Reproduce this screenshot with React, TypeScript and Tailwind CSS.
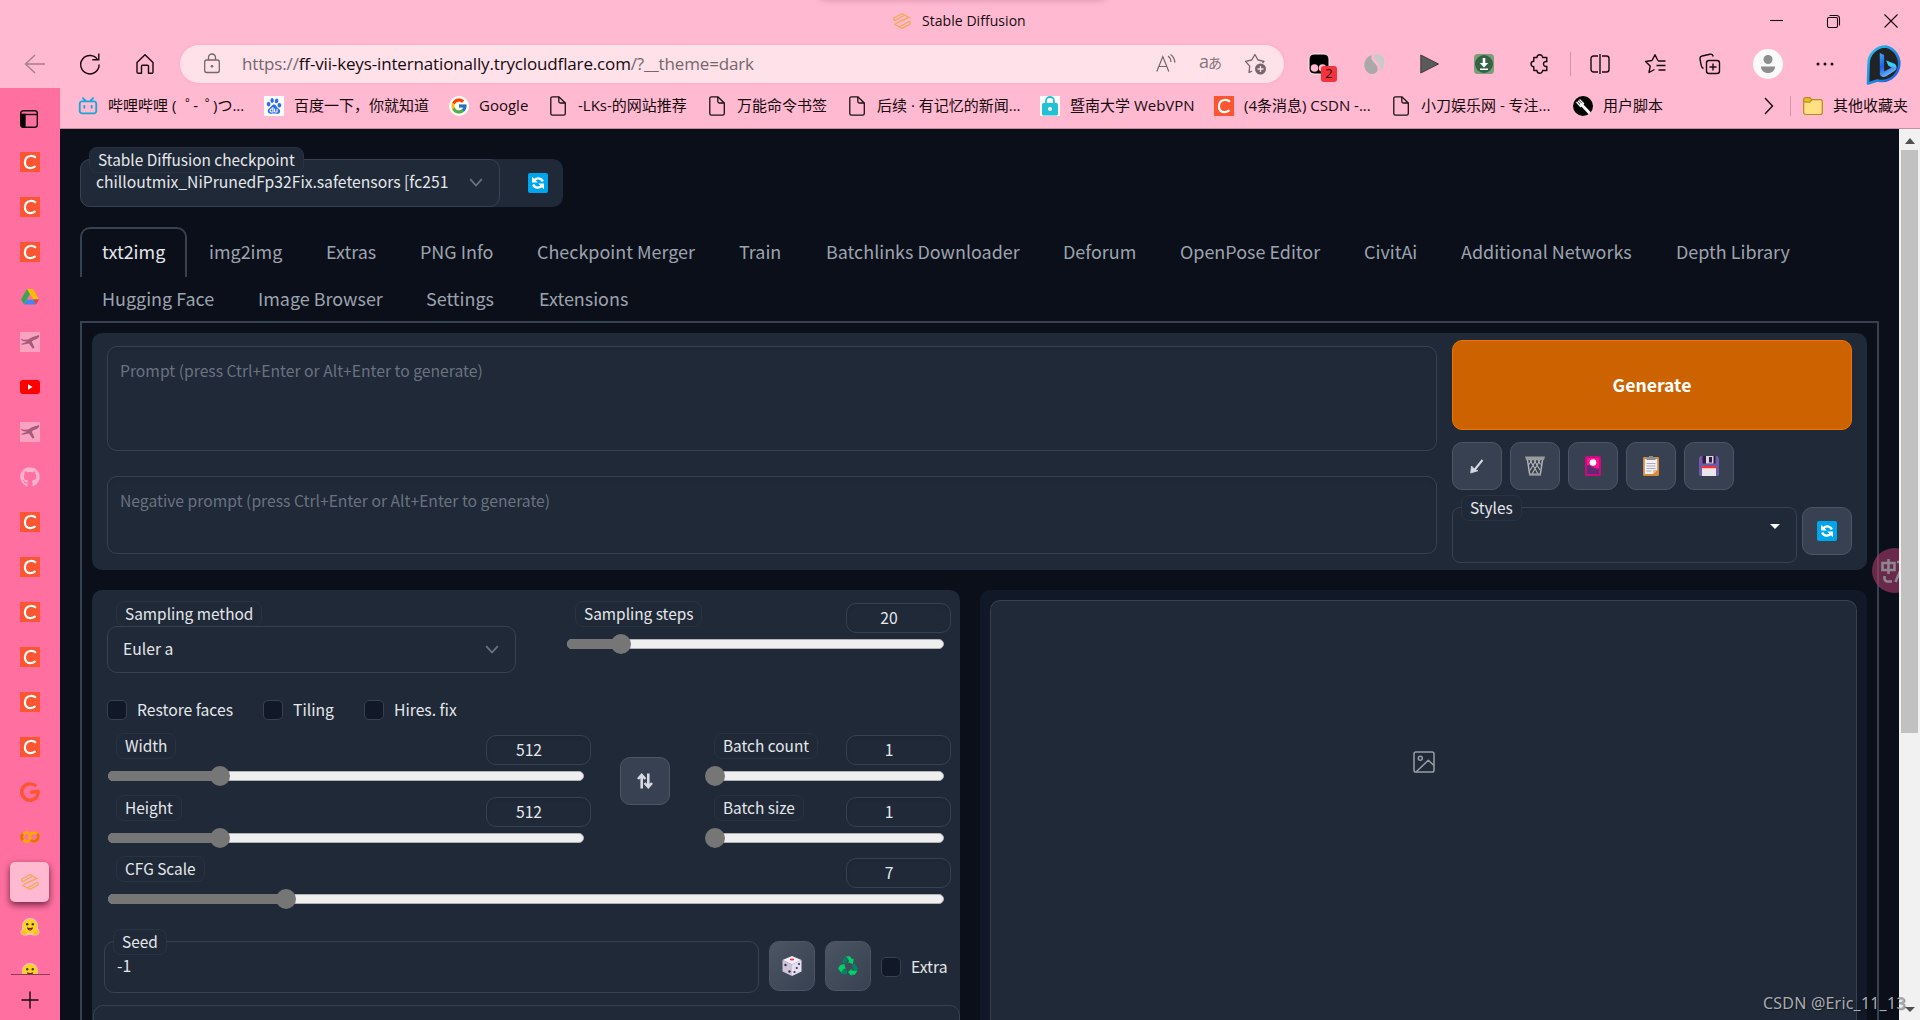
import type { ReactNode } from "react";
import clsx from "clsx";
import { FaGithub } from "react-icons/fa";
import { FcGoogle } from "react-icons/fc";
import { RiBaiduFill, RiBilibiliLine } from "react-icons/ri";

const UI_FONT = "font-['Open_Sans','Noto_Sans_CJK_SC',sans-serif]";
const APP_FONT = "font-['Noto_Sans_CJK_SC','Noto_Sans',sans-serif]";

/* ---------- small icons ---------- */

function GradioIcon({ size = 18 }: { size?: number }) {
  return (
    <svg width={size} height={size} viewBox="0 0 18 18" fill="none" stroke="#f6a95f" strokeWidth="1.400" strokeLinejoin="round">
      <path d="M1 9V6l8-4.300L17 6M17 9v3l-8 4.300L1 12" />
      <path d="M1 9l10.500-5.800M2.500 11.700 15.500 5.500M6.500 14.800 17 9" />
    </svg>
  );
}

function CsdnIcon() {
  return (
    <svg width="20" height="20" viewBox="0 0 20 20">
      <rect width="20" height="20" fill="#fc5531" />
      <path d="M15.200 5.200C13.800 4 12 3.700 10.300 4 7 4.500 5 7.200 4.900 10.300c-.1 3.500 2 5.900 5.300 5.900 1.800 0 3.300-.5 4.600-1.500" fill="none" stroke="#fff" strokeWidth="2.200" strokeLinecap="round" />
    </svg>
  );
}

function DocIcon() {
  return (
    <svg width="20" height="20" viewBox="0 0 20 20" fill="none" stroke="#1a1214" strokeWidth="1.300" strokeLinejoin="round">
      <path d="M4.500.8h6.300L17.300 7v10.500a1.700 1.700 0 0 1-1.700 1.700H4.500a1.700 1.700 0 0 1-1.700-1.700v-15A1.700 1.700 0 0 1 4.500.8Z" />
      <path d="M10.800.9v4.600A1.500 1.500 0 0 0 12.300 7h4.900" />
    </svg>
  );
}

function DriveIcon() {
  return (
    <svg width="20" height="20" viewBox="0 0 20 20">
      <path d="M7 2h6l-3 5.300-6 10.200L1 12.500Z" fill="#34a853" />
      <path d="M7 2h6l6 10.500h-6Z" fill="#fbbc04" />
      <path d="M7 12.500h12L16 17.500H4Z" fill="#4285f4" />
      <path d="M13.200 12.500H19l-3 5Z" fill="#ea4335" />
      <path d="M10 7.400 13 12.500H7Z" fill="#ff70a0" />
    </svg>
  );
}

function PlaneIcon() {
  return (
    <svg width="20" height="20" viewBox="0 0 20 20">
      <rect width="20" height="20" fill="#f9a3c1" />
      <path d="m.5 6.500 3 1.200L8 7.500 12.500 5l6.500-2 .3 1.600-2 2.200-4.300 1.700-1.200 1.200 2.700 5.800-1.800 1.300L9 11.500l-6.500 1.200L1 12l6-2.300L2.500 9Z" fill="#a85a7b" />
    </svg>
  );
}

function YoutubeIcon() {
  return (
    <svg width="20" height="20" viewBox="0 0 20 20">
      <rect y="3" width="20" height="14" rx="3" fill="#f00" />
      <path d="m8 7.200 4.500 2.800L8 12.800Z" fill="#fff" />
    </svg>
  );
}

function GIcon() {
  return (
    <svg width="20" height="20" viewBox="0 0 20 20" fill="none" stroke="#fc5531" strokeWidth="3.400" strokeLinecap="round" strokeLinejoin="round">
      <path d="M15 3.200C11 .8 5.500 1.600 3 5.500.8 9 1.500 14 5 16.700c4 3 10.500 1.500 12.400-3 .7-1.700.8-3.200.6-4.400l-6.500.9" />
    </svg>
  );
}

function ColabIcon() {
  return (
    <svg width="20" height="20" viewBox="0 0 20 20" fill="none" strokeWidth="3">
      <path d="M9 6.300A4.300 4.300 0 1 0 9 13.700" stroke="#f9ab00" />
      <path d="M3 6.800a4.300 4.300 0 0 0 0 6.400" stroke="#e8710a" />
      <circle cx="14" cy="10" r="4.300" stroke="#f9ab00" />
      <path d="M17 6.900a4.300 4.300 0 0 1-6.100 6.100" stroke="#e8710a" />
    </svg>
  );
}

function HugIcon() {
  return (
    <svg width="20" height="20" viewBox="0 0 20 20">
      <path d="M10 1a8 8 0 0 1 8 8v3c1.500 1.500 2 3.500.8 5-1.800 2-5.800 2-8.800.8-3 1.200-7 1.200-8.800-.8C0 15.500.5 13.500 2 12V9a8 8 0 0 1 8-8Z" fill="#f6c3cf" />
      <circle cx="10" cy="9.300" r="7.300" fill="#ffd21e" />
      <path d="M2.300 13c2 0 4 1.500 5 4-1.500 1.200-4.800 1-5.800-.5-.7-1.200-.3-2.500.8-3.500ZM17.700 13c-2 0-4 1.500-5 4 1.500 1.200 4.800 1 5.800-.5.7-1.200.3-2.500-.8-3.500Z" fill="#ffbf1a" />
      <circle cx="7.200" cy="7.300" r="1.200" fill="#3a3b45" />
      <circle cx="12.800" cy="7.300" r="1.200" fill="#3a3b45" />
      <path d="M7 10.300c2 1 4 1 6 0 0 1.900-1.300 3.300-3 3.300s-3-1.400-3-3.300Z" fill="#5a2b2b" />
      <path d="M8.500 13c.8-.9 2.200-.9 3 0-.8.800-2.200.8-3 0Z" fill="#ef4e4e" />
    </svg>
  );
}

function RefreshEmoji() {
  return (
    <svg width="20" height="20" viewBox="0 0 20 20">
      <rect width="20" height="20" rx="2" fill="#00a6ed" />
      <g fill="none" stroke="#fff" strokeWidth="2.300">
        <path d="M6 7.500A5 5 0 0 1 14.800 8.500" />
        <path d="M14 12.500A5 5 0 0 1 5.200 11.500" />
      </g>
      <path d="M4 3.800v5.800h5.800ZM16 16.200v-5.800h-5.800Z" fill="#fff" />
    </svg>
  );
}

function ChevronDown() {
  return (
    <svg width="14" height="10" viewBox="0 0 14 10" fill="none" stroke="#6b7280" strokeWidth="1.800">
      <path d="m1.200 1.200 5.800 6.300 5.800-6.300" />
    </svg>
  );
}

/* ---------- browser chrome ---------- */

function TitleBar() {
  return (
    <div className="relative flex h-[41px] shrink-0 items-center">
      <div className="absolute left-[820px] -top-[9px] h-2 w-[285px] rounded-full shadow-[0_0_7px_rgba(120,60,80,0.4)]" />
      <div className="ml-[893px] flex w-[877px] items-center gap-[11px]">
        <GradioIcon />
        <span className="text-[14px] tracking-[0.05px] text-[#150a0e]">Stable Diffusion</span>
      </div>
      <svg width="128" height="14" viewBox="0 0 128 14" fill="none" stroke="#150a0e" strokeWidth="1.100">
        <path d="M0 6.500h13" />
        <path d="M59.500 1.500h7a3 3 0 0 1 3 3v7" />
        <rect x="57.500" y="3.500" width="10" height="10" rx="1.500" />
        <path d="m114.500.5 13 13m0-13-13 13" />
      </svg>
    </div>
  );
}

function AddressBar() {
  return (
    <div className="flex h-[38px] w-[1104px] items-center rounded-full bg-[#ffe1ea] pl-[23px] shadow-[0_0_3px_rgba(255,120,160,0.35)]">
      <svg width="18" height="22" viewBox="0 0 18 22" fill="none" stroke="#75666b" strokeWidth="1.300">
        <rect x="1.700" y="7" width="14.600" height="12.500" rx="2" />
        <path d="M5.500 7V4.500a3.500 3.500 0 0 1 7 0V7" />
        <circle cx="9" cy="13.200" r="1.300" fill="#75666b" stroke="none" />
      </svg>
      <div className="ml-[21px] w-[914px] whitespace-nowrap text-[17px] tracking-[-0.15px] text-[#75666b]">
        https://<span className="text-[#150a0e]">ff-vii-keys-internationally.trycloudflare.com</span>/?__theme=dark
      </div>
      <svg width="20" height="20" viewBox="0 0 20 20" fill="none" stroke="#75666b" strokeWidth="1.200">
        <path d="M.8 17.500 6.800 2.500l6 15M3 12.500h7.700" />
        <path d="M12 2c2 1.300 2.800 3 3 6M14.500.6c2.800 1.700 4 4.200 4.400 8" />
      </svg>
      <span className="-mt-[5px] ml-[23px] w-[24px] whitespace-nowrap text-[18px] leading-none tracking-[-1px] text-[#85767b]">
        a<span className="text-[14px]">あ</span>
      </span>
      <svg className="ml-[21px]" width="24" height="22" viewBox="0 0 24 22" fill="none" stroke="#75666b" strokeWidth="1.300" strokeLinejoin="round">
        <path d="M8 18.200 5 19.500l.7-6.300L1.500 8.300 7.700 7l3.200-5.500L14 7l6 1.300-1.500 1.700" />
        <circle cx="16.500" cy="16" r="5.500" fill="#75666b" stroke="none" />
        <path d="M16.500 13v6m-3-3h6" stroke="#ffe1ea" />
      </svg>
    </div>
  );
}

function BingIcon() {
  return (
    <svg width="40" height="42" viewBox="0 0 40 42">
      <defs>
        <linearGradient id="bing-ring" x1="0" y1="0" x2="1" y2="1">
          <stop offset="0" stopColor="#25c6f0" />
          <stop offset="1" stopColor="#1c55d8" />
        </linearGradient>
        <linearGradient id="bing-b" x1="0" y1="0" x2="0.400" y2="1">
          <stop offset="0" stopColor="#3fa9f8" />
          <stop offset="0.550" stopColor="#1b60e8" />
          <stop offset="1" stopColor="#6fb6f5" />
        </linearGradient>
      </defs>
      <path d="M21 2.500a17.500 17.500 0 1 1-8.500 34L3 39.500 3.500 20A17.300 17.300 0 0 1 21 2.500Z" fill="#222325" stroke="url(#bing-ring)" strokeWidth="2.600" strokeLinejoin="round" />
      <path d="m14.800 9 4.300 2v16.500l7.500-4-3.200-1.800-2-5.200 8 3.200c2.500 1.300 3 5 .5 7l-9 5.800c-3 1.200-6.100 0-6.100-3Z" fill="url(#bing-b)" />
      <path d="m21.200 16.500 8 3.300c1.500.8 2.200 2.500 2 4.700-1-1.800-2.500-2-5-1.500l-3-1.700Z" fill="#35d0f5" />
    </svg>
  );
}

function Toolbar() {
  return (
    <div className="flex h-[47px] shrink-0 items-center pb-[2px] pl-[24px]">
      <svg width="132" height="24" viewBox="0 0 132 24" fill="none" stroke="#150a0e" strokeWidth="1.400">
        <path d="M11 3 1.500 12l9.500 9M2 12h19" stroke="#a77e8c" />
        <path d="M73.700 7.800a9.200 9.200 0 1 0 1.400 4.700M74.800 1.500v6.300h-6.500" />
        <path d="M113 10.500 121 2.800l8 7.700v9.500a1.300 1.300 0 0 1-1.300 1.300h-3.200v-7a1 1 0 0 0-1-1h-5a1 1 0 0 0-1 1v7h-3.200A1.300 1.300 0 0 1 113 20Z" strokeLinejoin="round" />
      </svg>
      <div className="ml-[24px]">
        <AddressBar />
      </div>
      <div className="relative ml-[24px] h-[22px] w-[56px]">
        <svg width="22" height="22" viewBox="0 0 22 22">
          <rect x="1" y="1" width="20" height="20" rx="5" fill="#000" stroke="#fbe9ef" />
          <circle cx="6.500" cy="15" r="3.800" fill="#ffb9d1" />
          <circle cx="14.500" cy="15" r="3.800" fill="#ffb9d1" />
        </svg>
        <span className="absolute left-[13px] top-[13px] flex h-4 w-4 items-center justify-center rounded-[3px] bg-[#f4333c] text-[13px] leading-none text-[#2a0508]">
          2
        </span>
      </div>
      <svg className="w-[56px]" width="56" height="22" viewBox="0 0 56 22">
        <path d="M8 2C3 3.500.3 7.500.3 12S3.500 21 8 21c4 0 6-2.500 5.500-6C13 11 8 8.500 7.500 5.500 7.300 4 7.500 3 8 2Z" fill="#a9a9a9" />
        <path d="M12 1c4.500-.5 8.500 2.500 8.500 7.500 0 4.500-2 8-5.500 10 1.500-3 1-6-1-8.500S9.500 5 9.500 3.500C9.500 2 10.500 1.200 12 1Z" fill="#cacaca" />
      </svg>
      <svg width="54" height="22" viewBox="0 0 54 22">
        <path d="M.8 2v18L18.500 11Z" fill="#5a5a5a" stroke="#3e3e3e" />
      </svg>
      <svg width="55" height="22" viewBox="0 0 55 22">
        <rect y="1" width="20" height="20" rx="3.500" fill="#7e9d76" />
        <circle cx="10" cy="11" r="9" fill="#336248" />
        <path d="M8.700 5h2.600v5h2.900L10 14.500 5.800 10h2.900ZM6 15.500h8v1.500H6Z" fill="#fff" />
      </svg>
      <svg width="41" height="22" viewBox="0 0 41 22" fill="none" stroke="#150a0e" strokeWidth="1.400" strokeLinejoin="round">
        <path d="M4.800 4.500H8a2.800 2.800 0 0 1 5.600 0h4.200v4.200c-1.500-.6-3.300.3-3.300 2.300s1.800 2.900 3.300 2.300v4.200h-4.200a2.800 2.800 0 0 1-5.600 0H4.800v-3.700a2.800 2.800 0 0 1 0-5.600Z" />
      </svg>
      <div className="h-6 w-px bg-[#d391a8]" />
      <svg className="ml-[19px]" width="134" height="22" viewBox="0 0 134 22" fill="none" stroke="#150a0e" strokeWidth="1.400" strokeLinejoin="round">
        <path d="M8 3H3.500A2.500 2.500 0 0 0 1 5.500v11A2.500 2.500 0 0 0 3.500 19H8M12 3h4.500A2.500 2.500 0 0 1 19 5.500v11a2.500 2.500 0 0 1-2.500 2.500H12M10 1v20" />
        <path d="M68 7.700 65 1.700l-3 5.800-6.500 1 4.700 4.500L59 19.500l5.500-3M68 8h7.500M66.500 12.500h9M68.500 17h7" />
        <rect x="116.500" y="7.500" width="13" height="13" rx="2.500" />
        <path d="M123 10.500v7m-3.500-3.500h7M113.500 15.500c-1.500-.5-2-2-2.300-3.200L110 6c-.2-1.500.5-2.700 2-3l8-1.800c1.500-.3 2.800.5 3.200 2.300" />
      </svg>
      <div className="ml-[29px] flex h-[30px] w-[30px] items-center justify-center rounded-full bg-[#fafafa]">
        <svg width="16" height="18" viewBox="0 0 16 18" fill="#8d8d8d">
          <circle cx="8" cy="4.500" r="4.500" />
          <path d="M1 11.500h14c0 4-3 6.500-7 6.500s-7-2.500-7-6.500Z" />
        </svg>
      </div>
      <svg className="ml-[33px]" width="18" height="4" viewBox="0 0 18 4" fill="#150a0e">
        <circle cx="2" cy="2" r="1.500" />
        <circle cx="9" cy="2" r="1.500" />
        <circle cx="16" cy="2" r="1.500" />
      </svg>
      <div className="ml-[31px] pt-[2px]">
        <BingIcon />
      </div>
    </div>
  );
}

const BOOKMARKS: { label: ReactNode; width: string; icon: ReactNode }[] = [
  {
    label: (
      <>
        哔哩哔哩 ( <span className="ml-[5px] tracking-[-7px]">゜</span>- <span className="ml-[3px] tracking-[-7px]">゜</span>)つ...
      </>
    ),
    width: "w-[186px]",
    icon: <RiBilibiliLine size={22} color="#17a5dc" className="-mx-px" />,
  },
  {
    label: "百度一下，你就知道",
    width: "w-[185px]",
    icon: (
      <span className="flex h-5 w-5 items-center justify-center bg-white">
        <RiBaiduFill size={20} color="#2f6bf0" />
      </span>
    ),
  },
  {
    label: "Google",
    width: "w-[99px]",
    icon: (
      <span className="flex h-5 w-5 items-center justify-center rounded-full bg-white">
        <FcGoogle size={18} />
      </span>
    ),
  },
  { label: "-LKs-的网站推荐", width: "w-[159px]", icon: <DocIcon /> },
  { label: "万能命令书签", width: "w-[140px]", icon: <DocIcon /> },
  { label: "后续 · 有记忆的新闻...", width: "w-[193px]", icon: <DocIcon /> },
  {
    label: "暨南大学 WebVPN",
    width: "w-[174px]",
    icon: (
      <svg width="20" height="20" viewBox="0 0 20 20">
        <rect width="20" height="20" fill="#fff" />
        <path d="M6 8V5a4 4 0 0 1 8 0v3" fill="none" stroke="#22c1d6" strokeWidth="1.800" />
        <rect x="2" y="7" width="16" height="12.500" rx="1.500" fill="#22c1d6" />
        <circle cx="10" cy="13" r="2" fill="#fff" />
      </svg>
    ),
  },
  { label: "(4条消息) CSDN -...", width: "w-[177px]", icon: <CsdnIcon /> },
  { label: "小刀娱乐网 - 专注...", width: "w-[182px]", icon: <DocIcon /> },
  {
    label: "用户脚本",
    width: "w-[191px]",
    icon: (
      <svg width="20" height="20" viewBox="0 0 20 20">
        <circle cx="10" cy="10" r="10" fill="#000" />
        <path d="M8.500 8.500 16 16.500" stroke="#fff" strokeWidth="3" strokeLinecap="round" />
        <path d="m3.500 6 4 4.500 3-3-4-4M5 4.700l4 4" stroke="#fff" strokeWidth="1.300" fill="none" />
      </svg>
    ),
  },
];

function BookmarkBar() {
  return (
    <div className="flex h-[41px] shrink-0 items-center border-b border-[#c88ba2] pb-[4px] pl-[18px] text-[15px] text-[#150a0e]">
      {BOOKMARKS.map((b, i) => (
        <div key={i} className={clsx("flex shrink-0 items-center gap-[10px] whitespace-nowrap", b.width)}>
          {b.icon}
          <span className="pb-[2px]">{b.label}</span>
        </div>
      ))}
      <svg width="10" height="18" viewBox="0 0 10 18" fill="none" stroke="#150a0e" strokeWidth="1.400">
        <path d="m1 1 7.500 8L1 17" />
      </svg>
      <div className="ml-[16px] h-5 w-px bg-[#d391a8]" />
      <svg className="ml-[12px]" width="20" height="20" viewBox="0 0 20 20" stroke="#b98a1d" strokeWidth="1.200">
        <rect x=".7" y="3.700" width="18.600" height="14.800" rx="2" fill="#ffe083" />
        <path d="M.7 6V3.300a1.700 1.700 0 0 1 1.700-1.700h4.400l2 2.200-2 2.300Z" fill="#f5b82a" />
      </svg>
      <span className="ml-[10px] whitespace-nowrap pb-[2px]">其他收藏夹</span>
    </div>
  );
}

const SIDE_TABS: ReactNode[] = [
  <CsdnIcon />,
  <CsdnIcon />,
  <CsdnIcon />,
  <DriveIcon />,
  <PlaneIcon />,
  <YoutubeIcon />,
  <PlaneIcon />,
  <FaGithub size={20} color="#ffb3cc" />,
  <CsdnIcon />,
  <CsdnIcon />,
  <CsdnIcon />,
  <CsdnIcon />,
  <CsdnIcon />,
  <CsdnIcon />,
  <GIcon />,
  <ColabIcon />,
  <GradioIcon />,
  <HugIcon />,
  <HugIcon />,
];

function VerticalTabs() {
  return (
    <div className="flex h-[932px] w-[60px] shrink-0 flex-col items-center bg-[#ff70a0]">
      <svg className="mt-[22px] mr-[2px] shrink-0" width="18" height="18" viewBox="0 0 18 18" fill="none" stroke="#150a0e" strokeWidth="1.400">
        <rect x=".7" y=".7" width="16.600" height="16.600" rx="2.500" />
        <path d="M1 4.500h16" />
        <path d="M1 4.500h4V17H2.500L1 15.500Z" fill="#000" />
      </svg>
      <div className="mt-[11px] flex h-[835px] w-full flex-col items-center overflow-hidden">
        {SIDE_TABS.map((icon, i) => (
          <div key={i} className="flex h-[45px] w-full shrink-0 items-center justify-center">
            {i === 16 ? (
              <div className="mr-px flex h-10 w-[39px] items-center justify-center rounded-[5px] bg-[#ffb9d1] shadow-[0_3px_7px_rgba(70,10,35,0.75)]">
                {icon}
              </div>
            ) : (
              icon
            )}
          </div>
        ))}
      </div>
      <div className="h-px w-[39px] shrink-0 bg-[#8a3a56]" />
      <svg className="mt-[16px] mr-px shrink-0" width="18" height="18" viewBox="0 0 18 18" stroke="#150a0e" strokeWidth="1.400">
        <path d="M9 .5v17M.5 9h17" />
      </svg>
    </div>
  );
}

/* ---------- web ui ---------- */

function BlockLabel({ children, className }: { children: ReactNode; className?: string }) {
  return (
    <span
      className={clsx(
        "flex h-[26px] w-fit items-center whitespace-nowrap rounded-[8px] border border-[#283342] bg-[#1f2937] px-[8px] text-[15.4px] leading-none text-[#e5e7eb]",
        className,
      )}
    >
      {children}
    </span>
  );
}

function ToolButton({ children, className }: { children: ReactNode; className?: string }) {
  return (
    <button
      type="button"
      className={clsx(
        "flex h-[48px] w-[50px] shrink-0 items-center justify-center rounded-[10px] border border-[#4b5563] bg-[#374151] text-[#d7dae0]",
        className,
      )}
    >
      {children}
    </button>
  );
}

function Slider({ value }: { value: number }) {
  return (
    <div className="relative h-[10px] rounded-[5px] border border-[#b2b2b2] bg-[#efefef]">
      <div className="-m-px h-[10px] rounded-l-[5px] bg-[#767676]" style={{ width: value }} />
      <div className="absolute -top-[6px] h-5 w-5 rounded-full bg-[#767676]" style={{ left: value - 11 }} />
    </div>
  );
}

function SliderField({ label, value, thumb, className }: { label: string; value: string; thumb: number; className?: string }) {
  return (
    <div className={clsx("h-[62px]", className)}>
      <div className="flex h-[38px] items-start justify-between">
        <BlockLabel className="ml-[8px]">{label}</BlockLabel>
        <div className="mt-[2px] flex h-[30px] w-[105px] items-center justify-center rounded-[10px] border border-[#374151] pr-[19px] text-[15.7px] leading-none text-[#e5e7eb] shadow-[inset_0_2px_4px_rgba(0,0,0,0.06)]">
          {value}
        </div>
      </div>
      <div className="mr-[7px]">
        <Slider value={thumb} />
      </div>
    </div>
  );
}

function Check({ label, className }: { label: string; className?: string }) {
  return (
    <label className={clsx("flex items-center gap-[10px] whitespace-nowrap text-[15.7px] leading-none text-[#e5e7eb]", className)}>
      <span className="h-5 w-5 rounded-[5px] border border-[#374151] bg-[#111827]" />
      {label}
    </label>
  );
}

function CheckpointPicker() {
  return (
    <div className="relative flex h-[48px] w-[483px] items-center rounded-[10px] bg-[#1f2937]">
      <div className="flex h-[48px] w-[420px] items-center justify-between rounded-[10px] border border-[#374151] pl-[15px] pr-[16px] text-[15.7px] text-[#e5e7eb]">
        <span className="whitespace-nowrap pb-[2px]">chilloutmix_NiPrunedFp32Fix.safetensors [fc251</span>
        <ChevronDown />
      </div>
      <div className="ml-[28px]">
        <RefreshEmoji />
      </div>
      <BlockLabel className="absolute -top-[12px] left-[9px]">Stable Diffusion checkpoint</BlockLabel>
    </div>
  );
}

const TABS: { label: string; width: string }[][] = [
  [
    { label: "txt2img", width: "w-[107px]" },
    { label: "img2img", width: "w-[117px]" },
    { label: "Extras", width: "w-[94px]" },
    { label: "PNG Info", width: "w-[117px]" },
    { label: "Checkpoint Merger", width: "w-[202px]" },
    { label: "Train", width: "w-[87px]" },
    { label: "Batchlinks Downloader", width: "w-[237px]" },
    { label: "Deforum", width: "w-[117px]" },
    { label: "OpenPose Editor", width: "w-[184px]" },
    { label: "CivitAi", width: "w-[97px]" },
    { label: "Additional Networks", width: "w-[215px]" },
    { label: "Depth Library", width: "w-[158px]" },
  ],
  [
    { label: "Hugging Face", width: "w-[156px]" },
    { label: "Image Browser", width: "w-[168px]" },
    { label: "Settings", width: "w-[113px]" },
    { label: "Extensions", width: "w-[132px]" },
  ],
];

function TabNav() {
  return (
    <div className="mt-[20px] h-[94px] text-[17.95px]">
      {TABS.map((row, r) => (
        <div key={r} className="flex h-[47px]">
          {row.map((tab) => {
            const active = tab.label === "txt2img";
            return (
              <div
                key={tab.label}
                className={clsx(
                  "flex h-[50px] shrink-0 items-center whitespace-nowrap",
                  tab.width,
                  active
                    ? "rounded-t-[10px] border-2 border-b-0 border-[#374151] pb-[4px] pl-[20px] text-[#e5e7eb]"
                    : "pb-[2px] pl-[22px] text-[#9ca3af]",
                )}
              >
                {tab.label}
              </div>
            );
          })}
        </div>
      ))}
    </div>
  );
}

function PromptPanel() {
  return (
    <div className="flex h-[237px] rounded-[10px] bg-[#1f2937] pl-[15px]">
      <div className="w-[1330px] shrink-0 pt-[13px] text-[15.7px] text-[#6b7280]">
        <div className="h-[105px] rounded-[10px] border border-[#374151] px-[12px] pt-[12px] leading-6 shadow-[inset_0_2px_4px_rgba(0,0,0,0.06)]">
          Prompt (press Ctrl+Enter or Alt+Enter to generate)
        </div>
        <div className="mt-[25px] h-[78px] rounded-[10px] border border-[#374151] px-[12px] pt-[12px] leading-6 shadow-[inset_0_2px_4px_rgba(0,0,0,0.06)]">
          Negative prompt (press Ctrl+Enter or Alt+Enter to generate)
        </div>
      </div>
      <div className="ml-[15px] w-[400px] pt-[7px]">
        <button type="button" className="h-[90px] w-full rounded-[10px] border border-[#f07300] bg-[#cc6300] text-[17.6px] font-bold text-white">
          Generate
        </button>
        <div className="mt-[12px] flex gap-2">
          <ToolButton>
            <svg width="14" height="16" viewBox="0 0 14 16" fill="none" stroke="#d7dae0" strokeWidth="2">
              <path d="M12.500 2 4 12.500" />
              <path d="m1.500 8-.8 7 7.300-2.300-3-.9Z" fill="#d7dae0" stroke="#d7dae0" strokeWidth=".8" />
            </svg>
          </ToolButton>
          <ToolButton>
            <svg width="20" height="20" viewBox="0 0 20 20" fill="none" stroke="#b5b5b5">
              <path d="M2.500 4 4.700 18.500h10.600L17.500 4" strokeWidth="1.500" />
              <path d="m5 4 8 14M9 4l6 10M13 4l2.500 4.500M15 4 7 18M11 4 5 14.500M7 4 4 8.500" strokeWidth="1.100" />
              <path d="M0 .5h20l-1 3.500H1ZM4 17.500h12v2H4Z" fill="#9b9b9b" stroke="none" />
            </svg>
          </ToolButton>
          <ToolButton>
            <svg width="16" height="20" viewBox="0 0 16 20">
              <rect width="16" height="20" rx="1.500" fill="#ca0b7e" />
              <rect x="2" y="2" width="12" height="16" fill="#ff0f91" />
              <path d="M2 9.500c2.500-.5 4 .3 6 1.800 2 1.200 4 1.500 6 1.200V18H2Z" fill="#5f2a70" />
              <circle cx="8" cy="6.500" r="3.300" fill="#fff" />
            </svg>
          </ToolButton>
          <ToolButton>
            <svg width="16" height="20" viewBox="0 0 16 20">
              <rect y="1" width="16" height="19" rx="1.200" fill="#d68b3c" />
              <path d="M1.800 3h12.400v11l-4 4H1.800Z" fill="#f3eef8" />
              <path d="m14.200 14-4 4v-4Z" fill="#f0b878" />
              <path d="M3.500 7.500h9M3.500 10h9M3.500 12.500h9M3.500 15h5" stroke="#a9a2b4" strokeWidth=".9" />
              <path d="M6 0h4v1.500h2.500V4h-9V1.500H6Z" fill="#8c8c94" />
            </svg>
          </ToolButton>
          <ToolButton>
            <svg width="20" height="20" viewBox="0 0 20 20">
              <path d="M1.500 0h17L20 2v17l-1 1H1l-1-1V1.500Z" fill="#6d5ba5" />
              <path d="M3.500 0h13v7.500h-13Z" fill="#321b41" />
              <path d="M7 0h7.500v7.500H7Z" fill="#d9d3e2" />
              <rect x="10" y="1" width="3" height="5.500" fill="#321b41" />
              <path d="M3 10h14v10H3Z" fill="#e9e6ec" />
              <path d="M3 10h14v2.200H3Z" fill="#f8312f" />
            </svg>
          </ToolButton>
        </div>
        <div className="mt-[17px] flex gap-[5px]">
          <div className="relative h-[56px] w-[345px] rounded-[8px] border border-[#374151]">
            <BlockLabel className="absolute -top-[13px] left-[8px]">Styles</BlockLabel>
            <svg className="absolute right-[16px] top-[16px]" width="10" height="5" viewBox="0 0 10 5" fill="#fff">
              <path d="M0 0h10L5 5Z" />
            </svg>
          </div>
          <ToolButton>
            <RefreshEmoji />
          </ToolButton>
        </div>
      </div>
    </div>
  );
}

function SettingsPanel() {
  return (
    <div className="h-[430px] w-[868px] shrink-0 overflow-hidden rounded-t-[10px] bg-[#1f2937]">
      <div className="flex h-[83px] pl-[15px] pt-[11px]">
        <div className="w-[409px]">
          <BlockLabel className="ml-[9px]">Sampling method</BlockLabel>
          <div className="-mt-px flex h-[47px] items-center justify-between rounded-[10px] border border-[#374151] pl-[15px] pr-[16px] text-[15.7px] text-[#e5e7eb]">
            <span className="pb-[2px]">Euler a</span>
            <ChevronDown />
          </div>
        </div>
        <SliderField className="ml-[51px] w-[384px]" label="Sampling steps" value="20" thumb={54} />
      </div>
      <div className="mt-[27px] flex h-5 items-center pl-[15px]">
        <Check className="w-[156px]" label="Restore faces" />
        <Check className="w-[101px]" label="Tiling" />
        <Check label="Hires. fix" />
      </div>
      <div className="mt-[13px] flex pl-[16px]">
        <div className="w-[483px]">
          <SliderField label="Width" value="512" thumb={112} />
          <SliderField label="Height" value="512" thumb={112} />
        </div>
        <ToolButton className="ml-[29px] mt-[24px]">
          <svg width="16" height="16" viewBox="0 0 16 16" fill="none" stroke="#d7dae0" strokeWidth="2.600">
            <path d="M4.700 15.500V2M1 6l3.700-4.100L8.400 6" />
            <path d="M11.300.5V14M7.600 10l3.700 4.100L15 10" />
          </svg>
        </ToolButton>
        <div className="ml-[36px] w-[245px]">
          <SliderField label="Batch count" value="1" thumb={9} />
          <SliderField label="Batch size" value="1" thumb={9} />
        </div>
      </div>
      <div className="-mt-px pl-[16px]">
        <SliderField className="w-[843px]" label="CFG Scale" value="7" thumb={178} />
      </div>
      <div className="mt-[23px] flex pl-[12px]">
        <div className="relative h-[52px] w-[655px] rounded-[10px] border border-[#374151] pl-[12px] pt-[12px] text-[15.7px] leading-6 text-[#e5e7eb]">
          -1
          <BlockLabel className="absolute -top-[13px] left-[8px]">Seed</BlockLabel>
        </div>
        <button type="button" className="ml-[10px] flex h-[50px] w-[46px] items-center justify-center rounded-[10px] border border-[#4b5563] bg-gradient-to-br from-[#4b5563] to-[#374151]">
          <svg width="20" height="20" viewBox="0 0 20 20">
            <path d="M10 0 19.500 4 10 8.500.5 4Z" fill="#f3eef8" />
            <path d="M.5 4 10 8.500V20L.5 15.500Z" fill="#cdc4d6" />
            <path d="M19.500 4 10 8.500V20l9.500-4.500Z" fill="#e6dff0" />
            <ellipse cx="10" cy="3.500" rx="2.200" ry="1.100" fill="#f8312f" />
            <g fill="#402a5c">
              <circle cx="3.500" cy="9" r="1.200" />
              <circle cx="7.500" cy="15.500" r="1.200" />
              <circle cx="17" cy="8" r="1.100" />
              <circle cx="14.800" cy="12" r="1.100" />
              <circle cx="12.500" cy="16" r="1.100" />
            </g>
          </svg>
        </button>
        <button type="button" className="ml-[10px] flex h-[50px] w-[46px] items-center justify-center rounded-[10px] border border-[#4b5563] bg-gradient-to-br from-[#4b5563] to-[#374151]">
          <svg width="20" height="20" viewBox="0 0 20 20">
            <path d="m7 .5 5-.2 2 3 1.800-.8-.8 5.500-5.300-1.700 1.600-1L9 1.500Z" fill="#00d26a" />
            <path d="M7 .6 9.500 4 7.300 8 3.800 6Z" fill="#008463" />
            <path d="M1 9.500 6.200 8l1.700 5-1.700-.6L4 17.800 0 12.500l2-3Z" fill="#00d26a" />
            <path d="M5 13.500h4v4.800H4.500L3 16Z" fill="#008463" />
            <path d="m10 16.200 3.500-3.700v2h6l-2.700 4.200h-3.300v1.300Z" fill="#00d26a" />
            <path d="m13.500 9.500 3.500-2 3 5.500-1 1.500h-3Z" fill="#008463" />
          </svg>
        </button>
        <Check className="ml-[10px] h-[52px]" label="Extra" />
      </div>
      <div className="ml-px mt-[12px] h-[60px] rounded-[10px] border border-[#374151]" />
    </div>
  );
}

function Gallery() {
  return (
    <div className="ml-[20px] h-[430px] w-[887px] rounded-t-[10px] bg-[#111827] px-[10px] pt-[10px]">
      <div className="flex h-[420px] justify-center rounded-t-[10px] border border-b-0 border-[#374151] bg-[#1f2937] pt-[150px]">
        <svg width="22" height="22" viewBox="0 0 22 22" fill="none" stroke="#989da5" strokeWidth="1.500" strokeLinejoin="round">
          <rect x="1" y="1" width="20" height="20" rx="1.800" />
          <circle cx="7.300" cy="7.300" r="2" />
          <path d="M3 21 15.300 9.300 21 14.500" />
        </svg>
      </div>
    </div>
  );
}

function Scrollbar() {
  return (
    <div className="flex h-full w-[21px] shrink-0 flex-col items-center bg-[#f1f1f1]">
      <svg className="mt-[9px]" width="10" height="6" viewBox="0 0 10 6" fill="#505050">
        <path d="M0 6h10L5 0Z" />
      </svg>
      <div className="mt-[6px] h-[583px] w-[17px] bg-[#c1c1c1]" />
      <svg className="mt-[274px]" width="10" height="5" viewBox="0 0 10 5" fill="#505050">
        <path d="M0 0h10L5 5Z" />
      </svg>
    </div>
  );
}

function WebUi() {
  return (
    <div className={clsx("flex h-[891px] bg-[#0b0f19]", APP_FONT)}>
      <div className="relative w-[1839px] shrink-0 overflow-hidden pl-[20px] pt-[30px]">
        <CheckpointPicker />
        <TabNav />
        <div className="h-[710px] w-[1799px] border-2 border-b-0 border-[#374151] px-[10px] pt-[10px]">
          <PromptPanel />
          <div className="mt-[20px] flex">
            <SettingsPanel />
            <Gallery />
          </div>
        </div>
        {/* floating translate bubble */}
        <div className="absolute left-[1812px] top-[419px] h-[45px] w-[45px] rounded-full bg-[#a83a6c]/60">
          <svg width="45" height="45" viewBox="0 0 45 45" fill="none" stroke="#8f858f" strokeWidth="2.600">
            <path d="M10.500 15h12v7h-12ZM16.500 11v15M25 14h6" />
            <path d="M12.500 28v2.500a3 3 0 0 0 3 3H20M23.500 34l5-12 5 12" />
          </svg>
        </div>
      </div>
      <Scrollbar />
    </div>
  );
}

export default function App() {
  return (
    <div className={clsx("relative flex h-[1020px] w-[1920px] flex-col overflow-hidden bg-[#ffb9d1]", UI_FONT)}>
      <TitleBar />
      <Toolbar />
      <div className="flex">
        <VerticalTabs />
        <div className="flex w-[1860px] flex-col">
          <BookmarkBar />
          <WebUi />
        </div>
      </div>
      <span className="absolute left-[1763px] top-[992px] whitespace-nowrap font-['Noto_Sans',sans-serif] text-[16px] leading-[22px] tracking-[0.2px] text-[#a9acb1] [text-shadow:1px_1px_1px_rgba(0,0,0,0.5)]">
        CSDN @Eric_11_13
      </span>
    </div>
  );
}
